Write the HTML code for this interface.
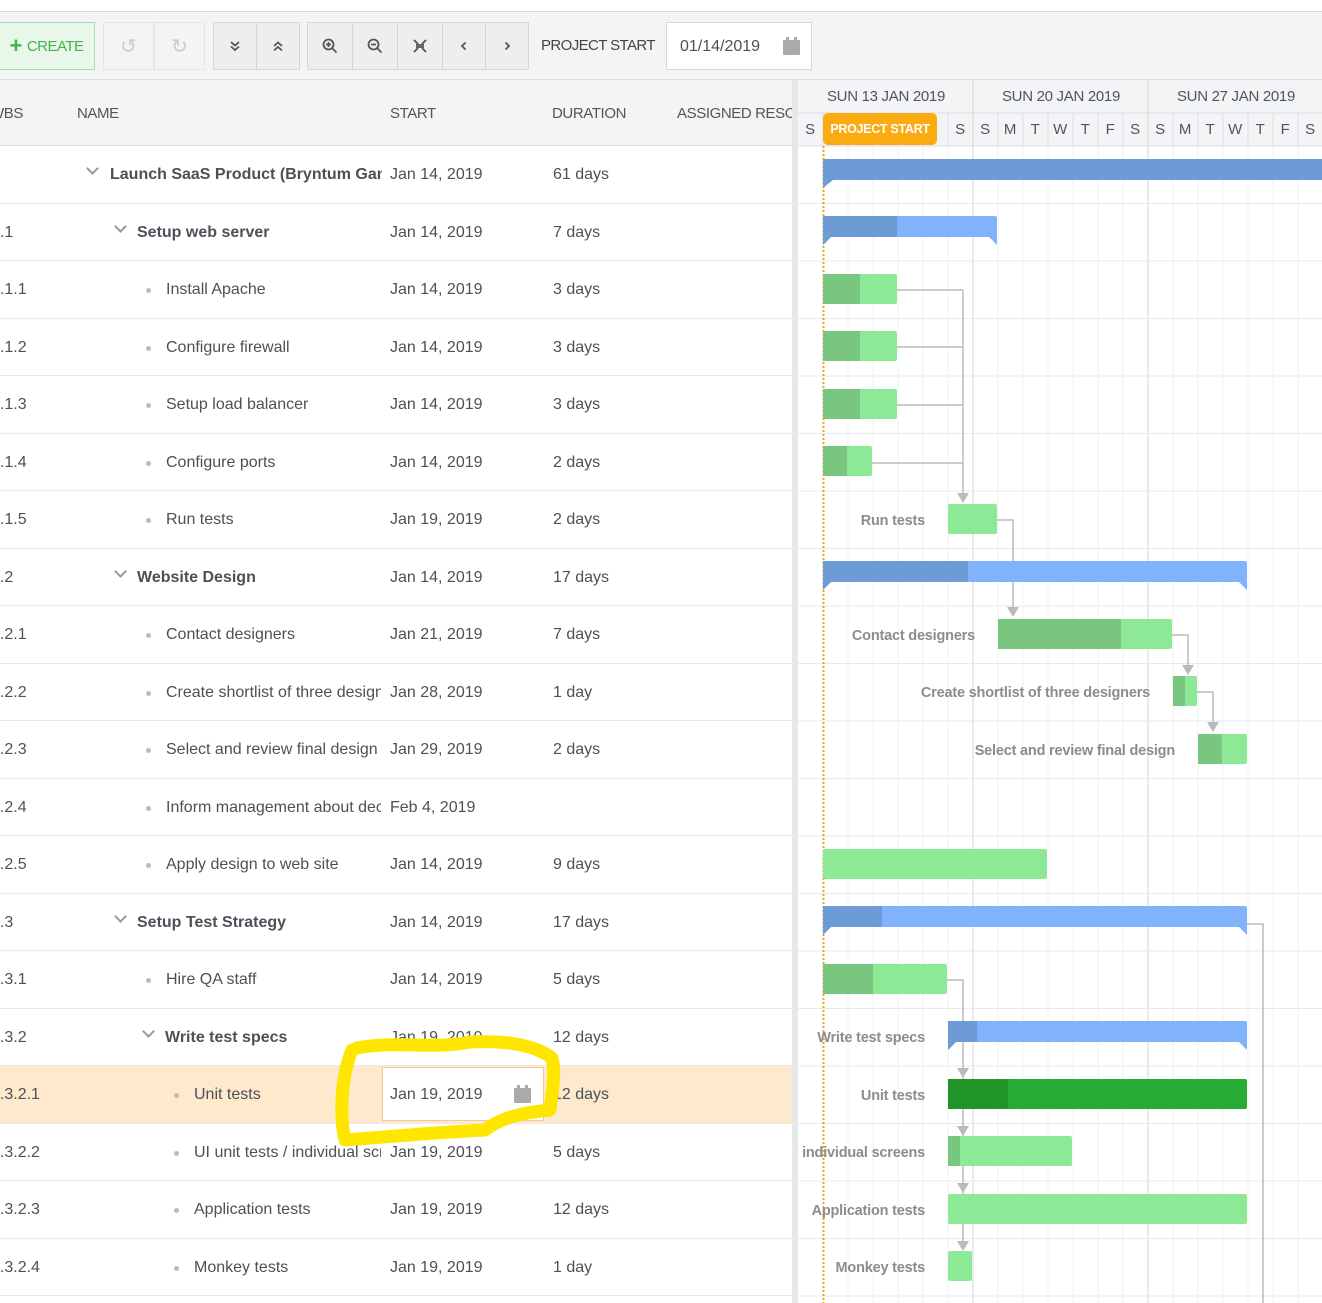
<!DOCTYPE html>
<html><head><meta charset="utf-8"><style>
*{box-sizing:border-box;margin:0;padding:0}
body{width:1322px;height:1303px;overflow:hidden;background:#fff;font-family:"Liberation Sans",sans-serif;color:#4b5158;position:relative}
.a{position:absolute;white-space:nowrap}
.tb{position:absolute;top:11px;left:0;width:1322px;height:69px;background:#f3f4f6;border-top:1px solid #d6d8db;border-bottom:1px solid #dcdee1}
.btn{position:absolute;top:10px;height:48px;border:1px solid #d3d6da;background:#eceef0;display:flex;align-items:center;justify-content:center;color:#555;font-size:15px}
.hdr{position:absolute;top:80px;left:0;width:792px;height:66px;background:#f3f4f6;border-bottom:1px solid #dcdee1;font-size:15px;color:#555;letter-spacing:-0.4px}
.row{position:absolute;left:0;width:792px;height:57.5px;border-bottom:1px solid #e9eaec;font-size:16px}
.row .c{position:absolute;top:20px;white-space:nowrap;overflow:hidden}
.w{left:-9px;width:70px}
.n{width:215px}
.s{left:390px}
.d{left:553px}
.b{font-weight:bold}
.ch{position:absolute;top:22px;width:9px;height:9px;border-right:2px solid #999;border-bottom:2px solid #999;transform:rotate(45deg)}
.dot{position:absolute;top:27px;width:5px;height:5px;border-radius:50%;background:#bbb}
.cal{position:absolute;width:17px;height:15px;background:#aaa;border-radius:1px}
.cal:before,.cal:after{content:"";position:absolute;top:-3px;width:3px;height:4px;background:#aaa}
.cal:before{left:3px}.cal:after{right:3px}
</style></head><body>
<div class="tb">
 <div class="btn" style="left:-2px;width:97px;background:#e9f6ea;border-color:#a9dcac;color:#3fb549;letter-spacing:-0.5px"><span style="font-size:22px;font-weight:bold;margin-right:5px">+</span>CREATE</div>
 <div class="btn" style="left:103px;width:51px;background:#f3f4f6;border-color:#e3e5e8;color:#ccc;font-size:20px">&#8634;</div>
 <div class="btn" style="left:154px;width:51px;background:#f3f4f6;border-color:#e3e5e8;color:#ccc;font-size:20px">&#8635;</div>
 <div class="btn" style="left:213px;width:44px"><svg width="12" height="12" viewBox="0 0 12 12"><path d="M2 2l4 3.5 4-3.5M2 6.5l4 3.5 4-3.5" stroke="#555" stroke-width="1.8" fill="none"/></svg></div>
 <div class="btn" style="left:256px;width:44px"><svg width="12" height="12" viewBox="0 0 12 12"><path d="M2 6l4-3.5 4 3.5M2 10.5l4-3.5 4 3.5" stroke="#555" stroke-width="1.8" fill="none"/></svg></div>
 <div class="btn" style="left:307px;width:46px"><svg width="16" height="16" viewBox="0 0 16 16"><circle cx="6.5" cy="6.5" r="5" fill="none" stroke="#555" stroke-width="1.8"/><path d="M10 10l4.5 4.5M4 6.5h5M6.5 4v5" stroke="#555" stroke-width="1.8"/></svg></div>
 <div class="btn" style="left:352px;width:46px"><svg width="16" height="16" viewBox="0 0 16 16"><circle cx="6.5" cy="6.5" r="5" fill="none" stroke="#555" stroke-width="1.8"/><path d="M10 10l4.5 4.5M4 6.5h5" stroke="#555" stroke-width="1.8"/></svg></div>
 <div class="btn" style="left:397px;width:46px"><svg width="16" height="16" viewBox="0 0 16 16"><path d="M2 2l4 4M14 2l-4 4M2 14l4-4M14 14l-4-4M4 7h8M4 9h8" stroke="#555" stroke-width="1.8"/></svg></div>
 <div class="btn" style="left:442px;width:44px"><svg width="10" height="10" viewBox="0 0 10 10"><path d="M6.5 1.5L3 5l3.5 3.5" stroke="#555" stroke-width="1.8" fill="none"/></svg></div>
 <div class="btn" style="left:485px;width:44px"><svg width="10" height="10" viewBox="0 0 10 10"><path d="M3.5 1.5L7 5l-3.5 3.5" stroke="#555" stroke-width="1.8" fill="none"/></svg></div>
 <div class="a" style="left:541px;top:25px;font-size:15px;color:#444;letter-spacing:-0.6px">PROJECT START</div>
 <div class="a" style="left:666px;top:10px;width:146px;height:48px;background:#fff;border:1px solid #d6d8db;font-size:16px;padding:15px 0 0 13px">01/14/2019<span class="cal" style="left:116px;top:17px"></span></div>
</div>
<div class="hdr">
 <div class="a" style="left:-10px;top:25px">WBS</div>
 <div class="a" style="left:77px;top:25px">NAME</div>
 <div class="a" style="left:390px;top:25px">START</div>
 <div class="a" style="left:552px;top:25px">DURATION</div>
 <div class="a" style="left:677px;top:25px;width:115px;overflow:hidden">ASSIGNED RESOURCES</div>
</div>
<div class="a" style="left:792px;top:80px;width:6px;height:1223px;background:#e6e7e9"></div>

<div class="row" style="top:146px"><div class="ch" style="left:88px;top:18px"></div><div class="c n b" style="left:110px;width:272px">Launch SaaS Product (Bryntum Gantt)</div><div class="c s">Jan 14, 2019</div><div class="c d">61 days</div></div>
<div class="row" style="top:203.5px"><div class="c w">1.1</div><div class="ch" style="left:116px;top:18px"></div><div class="c n b" style="left:137px">Setup web server</div><div class="c s">Jan 14, 2019</div><div class="c d">7 days</div></div>
<div class="row" style="top:261px"><div class="c w">1.1.1</div><div class="dot" style="left:146px"></div><div class="c n" style="left:166px">Install Apache</div><div class="c s">Jan 14, 2019</div><div class="c d">3 days</div></div>
<div class="row" style="top:318.5px"><div class="c w">1.1.2</div><div class="dot" style="left:146px"></div><div class="c n" style="left:166px">Configure firewall</div><div class="c s">Jan 14, 2019</div><div class="c d">3 days</div></div>
<div class="row" style="top:376px"><div class="c w">1.1.3</div><div class="dot" style="left:146px"></div><div class="c n" style="left:166px">Setup load balancer</div><div class="c s">Jan 14, 2019</div><div class="c d">3 days</div></div>
<div class="row" style="top:433.5px"><div class="c w">1.1.4</div><div class="dot" style="left:146px"></div><div class="c n" style="left:166px">Configure ports</div><div class="c s">Jan 14, 2019</div><div class="c d">2 days</div></div>
<div class="row" style="top:491px"><div class="c w">1.1.5</div><div class="dot" style="left:146px"></div><div class="c n" style="left:166px">Run tests</div><div class="c s">Jan 19, 2019</div><div class="c d">2 days</div></div>
<div class="row" style="top:548.5px"><div class="c w">1.2</div><div class="ch" style="left:116px;top:18px"></div><div class="c n b" style="left:137px">Website Design</div><div class="c s">Jan 14, 2019</div><div class="c d">17 days</div></div>
<div class="row" style="top:606px"><div class="c w">1.2.1</div><div class="dot" style="left:146px"></div><div class="c n" style="left:166px">Contact designers</div><div class="c s">Jan 21, 2019</div><div class="c d">7 days</div></div>
<div class="row" style="top:663.5px"><div class="c w">1.2.2</div><div class="dot" style="left:146px"></div><div class="c n" style="left:166px">Create shortlist of three designers</div><div class="c s">Jan 28, 2019</div><div class="c d">1 day</div></div>
<div class="row" style="top:721px"><div class="c w">1.2.3</div><div class="dot" style="left:146px"></div><div class="c n" style="left:166px">Select and review final design</div><div class="c s">Jan 29, 2019</div><div class="c d">2 days</div></div>
<div class="row" style="top:778.5px"><div class="c w">1.2.4</div><div class="dot" style="left:146px"></div><div class="c n" style="left:166px">Inform management about decision</div><div class="c s">Feb 4, 2019</div></div>
<div class="row" style="top:836px"><div class="c w">1.2.5</div><div class="dot" style="left:146px"></div><div class="c n" style="left:166px">Apply design to web site</div><div class="c s">Jan 14, 2019</div><div class="c d">9 days</div></div>
<div class="row" style="top:893.5px"><div class="c w">1.3</div><div class="ch" style="left:116px;top:18px"></div><div class="c n b" style="left:137px">Setup Test Strategy</div><div class="c s">Jan 14, 2019</div><div class="c d">17 days</div></div>
<div class="row" style="top:951px"><div class="c w">1.3.1</div><div class="dot" style="left:146px"></div><div class="c n" style="left:166px">Hire QA staff</div><div class="c s">Jan 14, 2019</div><div class="c d">5 days</div></div>
<div class="row" style="top:1008.5px"><div class="c w">1.3.2</div><div class="ch" style="left:144px;top:18px"></div><div class="c n b" style="left:165px">Write test specs</div><div class="c s">Jan 19, 2019</div><div class="c d">12 days</div></div>
<div class="row" style="top:1066px;background:#fee9cc"><div class="c w">1.3.2.1</div><div class="dot" style="left:174px"></div><div class="c n" style="left:194px;width:185px">Unit tests</div>
 <div class="a" style="left:382px;top:1px;width:162px;height:54px;background:#fff;border:1px solid #f2c995"></div>
 <div class="c s">Jan 19, 2019</div><span class="cal" style="left:514px;top:22px"></span><div class="c d">12 days</div></div>
<div class="row" style="top:1123.5px"><div class="c w">1.3.2.2</div><div class="dot" style="left:174px"></div><div class="c n" style="left:194px;width:187px">UI unit tests / individual screens</div><div class="c s">Jan 19, 2019</div><div class="c d">5 days</div></div>
<div class="row" style="top:1181px"><div class="c w">1.3.2.3</div><div class="dot" style="left:174px"></div><div class="c n" style="left:194px">Application tests</div><div class="c s">Jan 19, 2019</div><div class="c d">12 days</div></div>
<div class="row" style="top:1238.5px"><div class="c w">1.3.2.4</div><div class="dot" style="left:174px"></div><div class="c n" style="left:194px">Monkey tests</div><div class="c s">Jan 19, 2019</div><div class="c d">1 day</div></div>

<!-- yellow annotation -->
<svg class="a" style="left:0;top:0" width="800" height="1303" viewBox="0 0 800 1303"><path d="M357 1048 C400 1040 430 1050 470 1042 C505 1040 535 1045 552 1058 C556 1075 552 1090 550 1110 C530 1112 505 1115 485 1130 C440 1132 400 1136 345 1140 C340 1120 340 1080 352 1050" fill="none" stroke="#ffe600" stroke-width="13" stroke-linecap="round" stroke-linejoin="round"/></svg>

<svg class="a" style="left:798px;top:80px" width="524" height="1223" viewBox="798 80 524 1223" font-family="Liberation Sans, sans-serif">
<rect x="798" y="80" width="524" height="66" fill="#f3f4f6"/>
<g stroke="#f0f1f2" stroke-width="1">
<path d="M823 146V1303M848 146V1303M873 146V1303M898 146V1303M923 146V1303M948 146V1303M998 146V1303M1023 146V1303M1048 146V1303M1073 146V1303M1098 146V1303M1123 146V1303M1173 146V1303M1198 146V1303M1223 146V1303M1248 146V1303M1273 146V1303M1298 146V1303"/>
</g>
<g stroke="#dcdee1"><path d="M798 113H1322M798 146H1322"/>
<path d="M823 113V146M848 113V146M873 113V146M898 113V146M923 113V146M948 113V146M998 113V146M1023 113V146M1048 113V146M1073 113V146M1098 113V146M1123 113V146M1173 113V146M1198 113V146M1223 113V146M1248 113V146M1273 113V146M1298 113V146"/></g>
<g stroke="#d3d4d6"><path d="M973 80V1303M1148 80V1303"/></g>
<g stroke="#e9eaec"><path d="M798 203.5H1322M798 261H1322M798 318.5H1322M798 376H1322M798 433.5H1322M798 491H1322M798 548.5H1322M798 606H1322M798 663.5H1322M798 721H1322M798 778.5H1322M798 836H1322M798 893.5H1322M798 951H1322M798 1008.5H1322M798 1066H1322M798 1123.5H1322M798 1181H1322M798 1238.5H1322M798 1296H1322"/></g>
<g fill="#4f555c" font-size="15" text-anchor="middle" letter-spacing="-0.3">
<text x="886" y="101">SUN 13 JAN 2019</text><text x="1061" y="101">SUN 20 JAN 2019</text><text x="1236" y="101">SUN 27 JAN 2019</text>
<g font-size="15"><text x="810" y="134">S</text><text x="960" y="134">S</text><text x="985" y="134">S</text><text x="1010" y="134">M</text><text x="1035" y="134">T</text><text x="1060" y="134">W</text><text x="1085" y="134">T</text><text x="1110" y="134">F</text><text x="1135" y="134">S</text><text x="1160" y="134">S</text><text x="1185" y="134">M</text><text x="1210" y="134">T</text><text x="1235" y="134">W</text><text x="1260" y="134">T</text><text x="1285" y="134">F</text><text x="1310" y="134">S</text></g>
</g>
<rect x="823" y="113" width="114" height="32" rx="5" fill="#fbab12"/>
<text x="880" y="133" fill="#fff" font-size="12.5" font-weight="bold" text-anchor="middle" letter-spacing="-0.3">PROJECT START</text>
<path d="M823.5 146V1303" stroke="#f2a51a" stroke-width="2" stroke-dasharray="2,2"/>
<g stroke="#bbb" stroke-width="1.5" fill="none">
<path d="M897 290H963M897 347H963M897 405H963M872 463H963M963 290V497"/>
<path d="M997 520H1013V612"/><path d="M1172 635H1188V670"/><path d="M1197 692H1213V727"/>
<path d="M947 980H963V1245"/><path d="M1247 924H1263V1303"/>
</g>
<g fill="#bbb"><path d="M957 493h12l-6 10z"/><path d="M1007 607h12l-6 10z"/><path d="M1182 665h12l-6 10z"/><path d="M1207 722h12l-6 10z"/><path d="M957 1068h12l-6 10z"/><path d="M957 1126h12l-6 10z"/><path d="M957 1183h12l-6 10z"/><path d="M957 1241h12l-6 10z"/></g>
<g>
<path d="M823 161a2 2 0 0 1 2-2H1322V180H833L823 188Z" fill="#6d9bd6"/>
<path d="M823 218a2 2 0 0 1 2-2H995a2 2 0 0 1 2 2V245L989 237H831L823 245Z" fill="#80b3fb"/><rect x="823" y="216" width="74" height="21" fill="#6d9bd6"/><path d="M823 237h8l-8 8z" fill="#6d9bd6"/>
<path d="M823 563a2 2 0 0 1 2-2H1245a2 2 0 0 1 2 2V590L1239 582H831L823 590Z" fill="#80b3fb"/><rect x="823" y="561" width="145" height="21" fill="#6d9bd6"/><path d="M823 582h8l-8 8z" fill="#6d9bd6"/>
<path d="M823 908a2 2 0 0 1 2-2H1245a2 2 0 0 1 2 2V935L1239 927H831L823 935Z" fill="#80b3fb"/><rect x="823" y="906" width="59" height="21" fill="#6d9bd6"/><path d="M823 927h8l-8 8z" fill="#6d9bd6"/>
<path d="M948 1023a2 2 0 0 1 2-2H1245a2 2 0 0 1 2 2V1050L1239 1042H956L948 1050Z" fill="#80b3fb"/><rect x="948" y="1021" width="29" height="21" fill="#6d9bd6"/><path d="M948 1042h8l-8 8z" fill="#6d9bd6"/>
</g>
<g fill="#8ee997">
<rect x="823" y="274" width="74" height="30" rx="2"/><rect x="823" y="331" width="74" height="30" rx="2"/><rect x="823" y="389" width="74" height="30" rx="2"/><rect x="823" y="446" width="49" height="30" rx="2"/>
<rect x="948" y="504" width="49" height="30" rx="2"/><rect x="998" y="619" width="174" height="30" rx="2"/><rect x="1173" y="676" width="24" height="30" rx="2"/><rect x="1198" y="734" width="49" height="30" rx="2"/>
<rect x="823" y="849" width="224" height="30" rx="2"/><rect x="823" y="964" width="124" height="30" rx="2"/><rect x="948" y="1136" width="124" height="30" rx="2"/><rect x="948" y="1194" width="299" height="30" rx="2"/><rect x="948" y="1251" width="24" height="30" rx="2"/>
</g>
<g fill="#79c680">
<rect x="823" y="274" width="37" height="30"/><rect x="823" y="331" width="37" height="30"/><rect x="823" y="389" width="37" height="30"/><rect x="823" y="446" width="24" height="30"/>
<rect x="998" y="619" width="123" height="30"/><rect x="1173" y="676" width="12" height="30"/><rect x="1198" y="734" width="24" height="30"/><rect x="823" y="964" width="50" height="30"/><rect x="948" y="1136" width="12" height="30"/>
</g>
<rect x="948" y="1079" width="299" height="30" rx="2" fill="#26ac34"/><rect x="948" y="1079" width="60" height="30" fill="#1f952a"/>
<g fill="#8c8c8c" font-size="14.5" font-weight="bold" text-anchor="end" letter-spacing="-0.2">
<text x="925" y="525">Run tests</text><text x="975" y="640">Contact designers</text><text x="1150" y="697">Create shortlist of three designers</text><text x="1175" y="755">Select and review final design</text>
<text x="925" y="1042">Write test specs</text><text x="925" y="1100">Unit tests</text><text x="925" y="1157">UI unit tests / individual screens</text><text x="925" y="1215">Application tests</text><text x="925" y="1272">Monkey tests</text>
</g>
</svg>
</body></html>
